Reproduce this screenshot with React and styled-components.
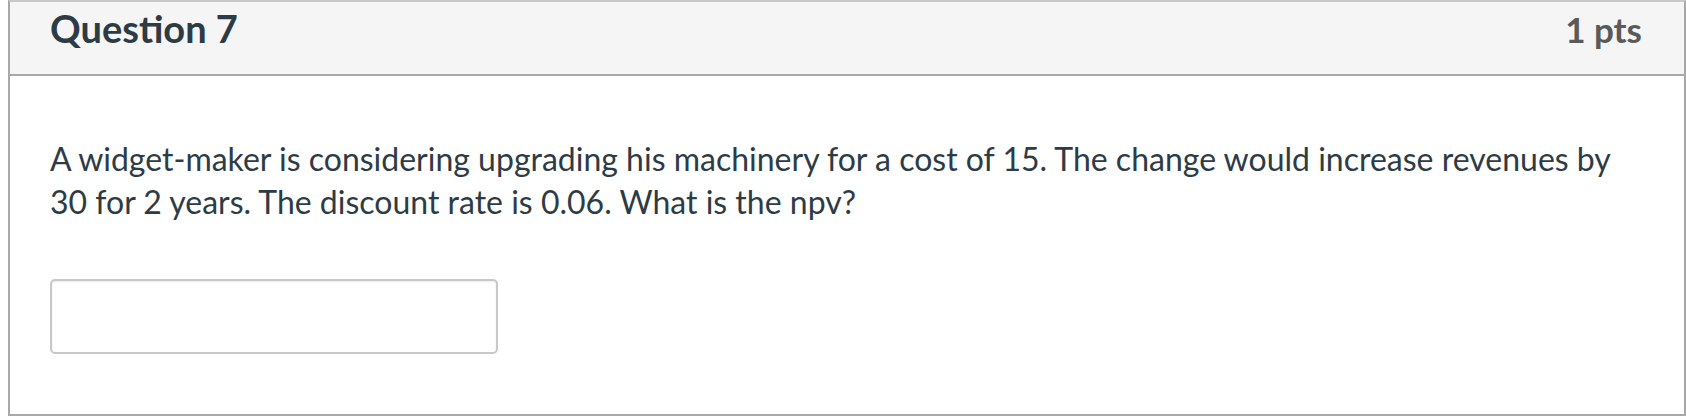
import React from "react";
import styled, { createGlobalStyle } from "styled-components";

const GlobalStyle = createGlobalStyle`
  html, body {
    margin: 0;
    padding: 0;
    background: #ffffff;
  }
  body {
    font-family: Lato, "Open Sans", "Liberation Sans", sans-serif;
    color: #2d3b45;
  }
`;

const Card = styled.div`
  box-sizing: border-box;
  margin-left: 8px;
  width: 1678px;
  height: 416px;
  border: 2px solid #a8a8a8;
  border-top-color: #c8c8c8;
  display: flex;
  flex-direction: column;
`;

const Header = styled.div`
  box-sizing: border-box;
  height: 74px;
  background: #f5f5f5;
  border-bottom: 2px solid #a8a8a8;
  display: flex;
  align-items: baseline;
  justify-content: space-between;
  padding: 4px 42px 0 40px;
`;

const Title = styled.h2`
  margin: 0;
  font-size: 38px;
  line-height: 1.2;
  font-weight: 700;
  color: #2d3b45;
`;

const Points = styled.span`
  font-size: 35px;
  font-weight: 700;
  color: #5a5a5a;
`;

const Body = styled.div`
  padding: 61px 40px 0 40px;
`;

const Text = styled.p`
  margin: 0;
  font-size: 32px;
  line-height: 43px;
  color: #2d3b45;
`;

const Answer = styled.input`
  box-sizing: border-box;
  display: block;
  margin-top: 56px;
  width: 448px;
  height: 75px;
  border: 2px solid #c8c8c8;
  border-radius: 5px;
  box-shadow: inset 0 1px 2px rgba(0, 0, 0, 0.08);
  background: #fff;
  font-family: inherit;
  font-size: 32px;
  padding: 0 12px;
  outline: none;
`;

export default function App() {
  return (
    <>
      <GlobalStyle />
      <Card>
        <Header>
          <Title>Question 7</Title>
          <Points>1 pts</Points>
        </Header>
        <Body>
          <Text>
            A widget-maker is considering upgrading his machinery for a cost of
            15. The change would increase revenues by 30 for 2 years. The
            discount rate is 0.06. What is the npv?
          </Text>
          <Answer type="text" aria-label="Answer" />
        </Body>
      </Card>
    </>
  );
}
